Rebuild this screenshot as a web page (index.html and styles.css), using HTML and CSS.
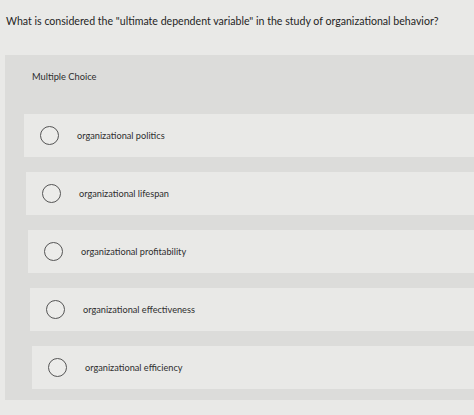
FILE: index.html
```html
<!DOCTYPE html>
<html lang="en">
<head>
    <meta charset="UTF-8">
    <title>Multiple Choice Question</title>
    <link rel="stylesheet" href="styles.css">
</head>
<body>
    <div class="question">What is considered the "ultimate dependent variable" in the study of organizational behavior?</div>
    <div class="panel">
        <div class="label">Multiple Choice</div>
        <div class="options">
            <label class="option"><span class="radio"></span><span class="text">organizational politics</span></label>
            <label class="option"><span class="radio"></span><span class="text">organizational lifespan</span></label>
            <label class="option"><span class="radio"></span><span class="text">organizational profitability</span></label>
            <label class="option"><span class="radio"></span><span class="text">organizational effectiveness</span></label>
            <label class="option"><span class="radio"></span><span class="text">organizational efficiency</span></label>
        </div>
    </div>
</body>
</html>
```

FILE: styles.css
```css
* {
    margin: 0;
    padding: 0;
    box-sizing: border-box;
}

body {
    width: 474px;
    height: 415px;
    overflow: hidden;
    background: #e9e9e7;
    font-family: 'Lato', sans-serif;
    color: #2a2a2a;
}

.question {
    padding: 15px 0 0 6px;
    height: 55px;
    font-size: 10.6px;
    white-space: nowrap;
    color: #1f1f1f;
}

.panel {
    margin-left: 5px;
    height: 345px;
    background: #dcdcda;
}

.label {
    padding: 16px 0 0 27px;
    height: 59px;
    font-size: 9.3px;
    color: #2e2e2e;
}

.options {
    display: flex;
    flex-direction: column;
    gap: 15px;
}

.option {
    display: flex;
    align-items: center;
    height: 43px;
    margin-left: 19px;
    padding-left: 16px;
    background: #e9e9e7;
}

.option:nth-child(2) { margin-left: 21px; }
.option:nth-child(3) { margin-left: 23px; }
.option:nth-child(4) { margin-left: 25px; }
.option:nth-child(5) { margin-left: 27px; }

.radio {
    width: 19px;
    height: 19px;
    border: 1.3px solid #555;
    border-radius: 50%;
    background: #ececea;
    flex-shrink: 0;
}

.text {
    margin-left: 18px;
    font-size: 9.2px;
    color: #2e2e2e;
}
```
